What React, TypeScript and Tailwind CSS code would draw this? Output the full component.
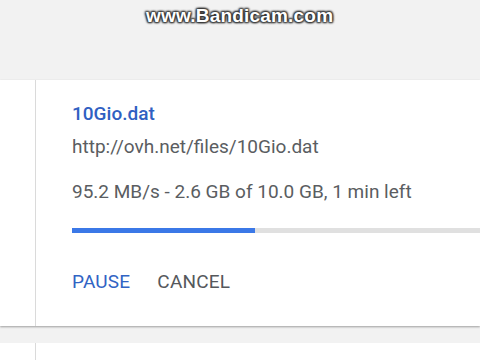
import React from "react";

export default function App() {
  return (
    <div className="relative w-[480px] h-[360px] overflow-hidden bg-[#f2f2f2] font-['Roboto','Liberation_Sans',sans-serif]">
      {/* watermark of the screen recorder */}
      <div
        className="absolute left-[146px] top-[2px] text-[19px] font-bold text-white tracking-[0.2px] font-['Liberation_Sans',sans-serif]"
        style={{ textShadow: "0 0 2px #333, 1px 1px 2px #333, -1px -1px 2px #333, 1px -1px 2px #333, -1px 1px 2px #333" }}
      >
        www.Bandicam.com
      </div>

      <div className="pt-[80px]">
        {/* download card */}
        <div className="flex bg-white shadow-[0_1px_2px_rgba(0,0,0,0.35)]">
          <div className="w-[36px] shrink-0 border-r border-[#dadada]" />
          <div className="pl-[36px] pt-[23px] pb-[33px] flex-1">
            <div className="text-[19px] leading-[22px] font-medium text-[#2f60c2]">10Gio.dat</div>
            <div className="mt-[11px] text-[19px] leading-[22px] text-[#5a5d61]">http://ovh.net/files/10Gio.dat</div>
            <div className="mt-[23px] text-[19px] leading-[22px] text-[#5a5d61]">
              95.2 MB/s - 2.6 GB of 10.0 GB, 1 min left
            </div>
            <div className="mt-[25px] h-[5px] bg-[#e0e0e0] flex">
              <div className="w-[183px] bg-[#3b78e7]" />
            </div>
            <div className="mt-[38px] flex gap-[27px] text-[19px] leading-[22px] tracking-[0.2px]">
              <span className="text-[#3164c4]">PAUSE</span>
              <span className="text-[#55585c]">CANCEL</span>
            </div>
          </div>
        </div>

        {/* next card */}
        <div className="mt-[17px] flex bg-white h-[40px]">
          <div className="w-[36px] shrink-0 border-r border-[#dadada]" />
        </div>
      </div>
    </div>
  );
}
